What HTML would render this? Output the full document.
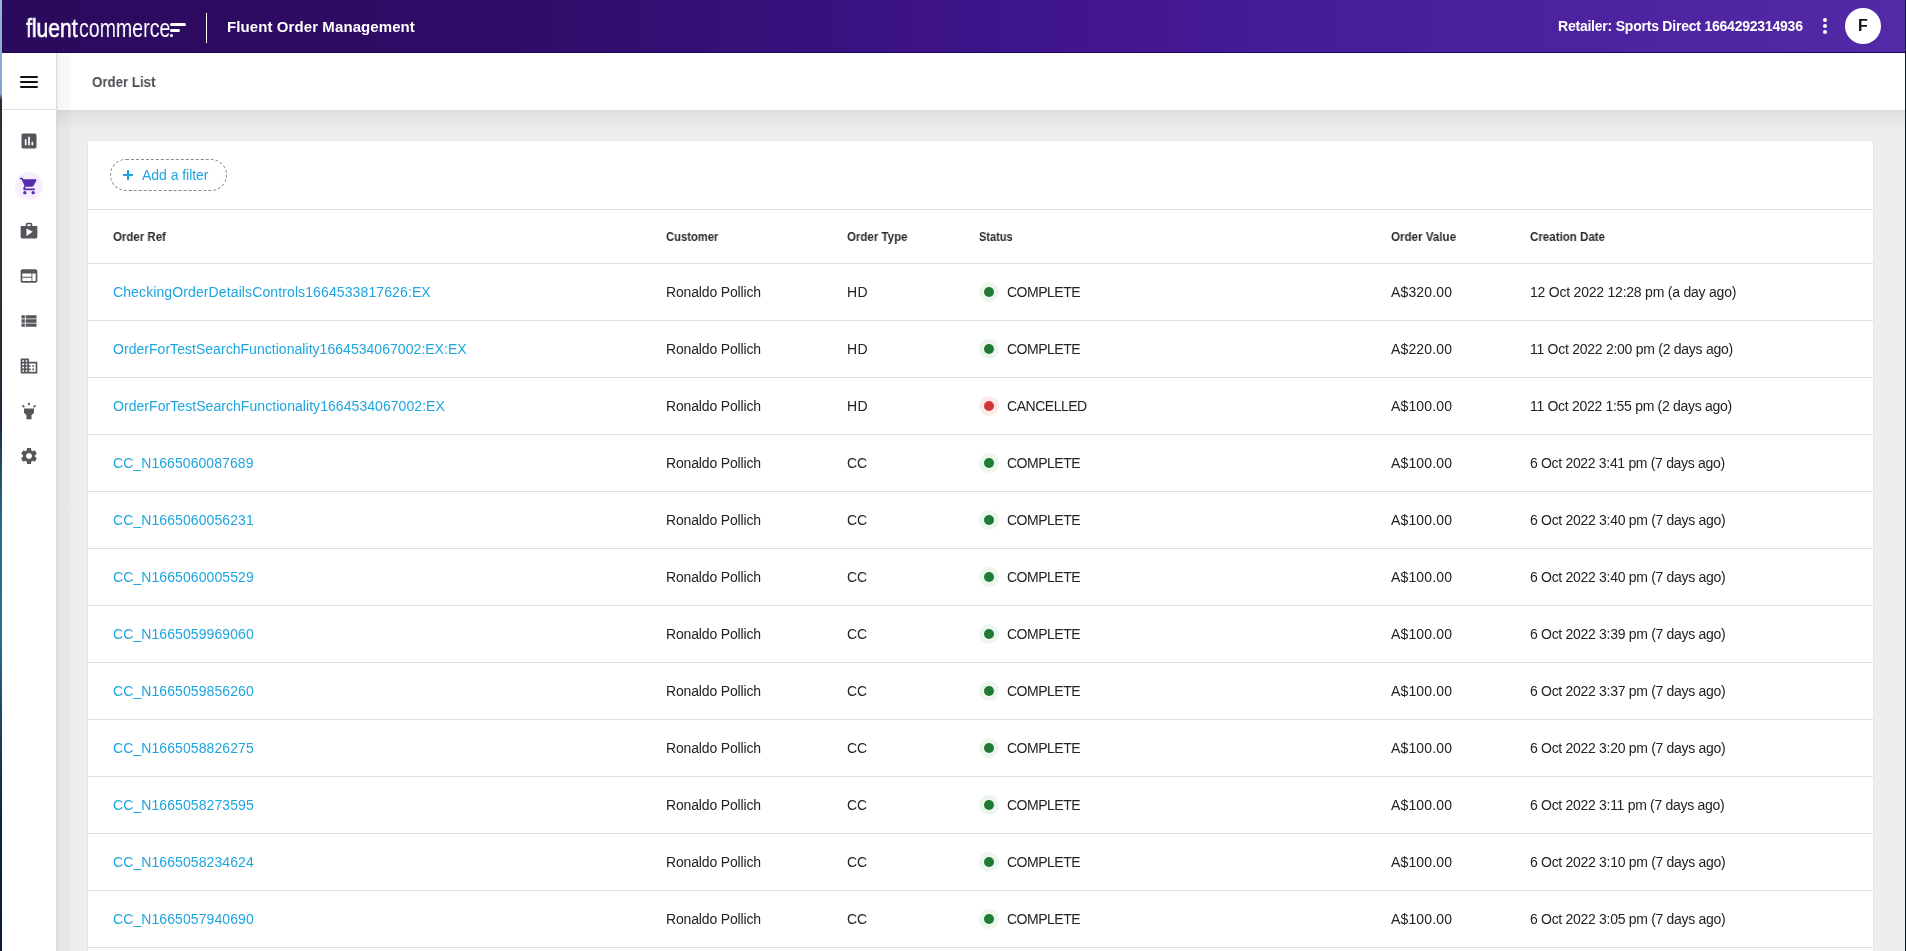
<!DOCTYPE html><html><head><meta charset="utf-8"><style>
*{box-sizing:border-box;margin:0;padding:0}
html,body{width:1906px;height:951px;overflow:hidden;background:#eeeeee;font-family:"Liberation Sans",sans-serif;position:relative}
.t{position:absolute;white-space:nowrap;line-height:1;will-change:transform}
.ic{position:absolute;display:block}
#edgeL{position:absolute;left:0;top:0;width:2px;height:951px;background:linear-gradient(to bottom,#94b8d8 0,#7ea6cb 94px,#2b2c38 100px,#35302e 250px,#1d2638 420px,#21506c 470px,#2a6d88 530px,#2b6f8a 640px,#1c4363 720px,#102341 820px,#0c1a33 951px)}
#edgeR{position:absolute;left:1905px;top:0;width:1px;height:951px;background:#0e1a28}
#hdr{position:absolute;left:2px;top:0;width:1903px;height:53px;background:linear-gradient(to right,#2b0a5d 0%,#2f0c66 25%,#3d1388 50%,#4a1f9e 75%,#5229a6 100%);border-bottom:1px solid #1c0550}
.bar{position:absolute;height:3px;border-radius:1.5px;background:#fff}
.divider{position:absolute;left:206px;top:13px;width:1px;height:30px;background:#fff}
.hw{color:#fff;font-weight:bold}
.kebab{position:absolute;left:1823px;width:4px;height:4px;border-radius:50%;background:#fff}
.avatar{position:absolute;left:1845px;top:8px;width:36px;height:36px;border-radius:50%;background:#fff}
#side{position:absolute;left:2px;top:53px;width:55px;height:898px;background:#fff;border-right:1px solid #dcdcdc}
#side .menu{position:absolute;left:0;top:56px;width:54px;height:1px;background:#e2e2e2}
.hamb{position:absolute;left:20px;width:18px;height:2px;background:#111;border-radius:1px}
.act{position:absolute;left:15px;top:172px;width:28px;height:28px;border-radius:50%;background:#f6eefd}
#titlebar{position:absolute;left:57px;top:53px;width:1848px;height:57px;background:#fff}
#shadowL{position:absolute;left:57px;top:53px;width:15px;height:898px;background:linear-gradient(to right,rgba(0,0,0,.08),rgba(0,0,0,.035) 12%,rgba(0,0,0,.025) 80%,rgba(0,0,0,0))}
#shadowT{position:absolute;left:57px;top:110px;width:1848px;height:26px;background:linear-gradient(to bottom,rgba(0,0,0,.075),rgba(0,0,0,.035) 30%,rgba(0,0,0,.01) 65%,rgba(0,0,0,0))}
#card{position:absolute;left:88px;top:141px;width:1785px;height:830px;background:#fff;border-radius:2px;box-shadow:0 0 2px rgba(0,0,0,.1),0 1px 2px rgba(0,0,0,.06)}
.hl{position:absolute;left:88px;width:1785px;height:1px;background:#e0e0e0}
.filter{position:absolute;left:110px;top:159px;width:117px;height:32px;border:1px dashed #8a8a8a;border-radius:16px}
.plus{position:absolute;background:#1ea5df}
.lk{color:#1ea5df;font-size:14px;letter-spacing:.09px}
.tx{color:#222;font-size:14px}
.th{color:#2b2b2b;font-size:12px;font-weight:bold;transform-origin:0 0}
.nm{letter-spacing:-.13px}.vl{letter-spacing:.15px}.st{letter-spacing:-.55px}.dt{letter-spacing:-.3px}
.ttl{color:#4b4e53;font-size:15px;font-weight:bold;transform:scaleX(.885);transform-origin:0 0}
.halo{position:absolute;width:20px;height:20px;border-radius:50%}
.dot{position:absolute;width:10px;height:10px;border-radius:50%}
</style></head><body>
<div id="edgeL"></div>
<div id="hdr"></div>
<div class="t" style="left:26px;top:15px;font-size:26px;color:#fff;-webkit-text-stroke:.6px #fff;transform:scaleX(.81);transform-origin:0 0">fluent</div>
<div class="t" style="left:78.8px;top:15px;font-size:26px;color:#fff;transform:scaleX(.752);transform-origin:0 0">commerce</div>
<div class="bar" style="left:170px;top:23px;width:16px"></div>
<div class="bar" style="left:170px;top:28.5px;width:10px"></div>
<div class="bar" style="left:170.3px;top:34px;width:3.2px;height:3.2px"></div>
<div class="divider"></div>
<div class="t hw" style="font-size:15px;left:227px;top:19px;letter-spacing:0.091px;">Fluent Order Management</div>
<div class="t hw" style="font-size:14px;letter-spacing:-.25px;left:1558px;top:19px;letter-spacing:-0.222px;">Retailer: Sports Direct 1664292314936</div>
<div class="kebab" style="top:18px"></div>
<div class="kebab" style="top:24px"></div>
<div class="kebab" style="top:30px"></div>
<div class="avatar"></div>
<div class="t " style="font-size:16px;font-weight:bold;color:#111;left:1858px;top:18px;">F</div>
<div id="side"><div class="menu"></div></div>
<div class="hamb" style="top:76px"></div>
<div class="hamb" style="top:81px"></div>
<div class="hamb" style="top:86px"></div>
<div class="act"></div>
<svg class="ic" style="left:19px;top:131px;width:20px;height:20px" viewBox="0 0 24 24"><path fill="#53575b" d="M19 3H5c-1.1 0-2 .9-2 2v14c0 1.1.9 2 2 2h14c1.1 0 2-.9 2-2V5c0-1.1-.9-2-2-2zM9 17H7v-7h2v7zm4 0h-2V7h2v10zm4 0h-2v-4h2v4z"/></svg>
<svg class="ic" style="left:19px;top:176px;width:20px;height:20px" viewBox="0 0 24 24"><path fill="#542cb0" d="M7 18c-1.1 0-1.99.9-1.99 2S5.9 22 7 22s2-.9 2-2-.9-2-2-2zM1 2v2h2l3.6 7.59-1.35 2.45c-.16.28-.25.61-.25.96 0 1.1.9 2 2 2h12v-2H7.42c-.14 0-.25-.11-.25-.25l.03-.12.9-1.63h7.45c.75 0 1.41-.41 1.75-1.03l3.58-6.49c.08-.14.12-.31.12-.48 0-.55-.45-1-1-1H5.21l-.94-2H1zm16 16c-1.1 0-1.99.9-1.99 2s.89 2 1.99 2 2-.9 2-2-.9-2-2-2z"/></svg>
<svg class="ic" style="left:19px;top:221px;width:20px;height:20px" viewBox="0 0 24 24"><path fill="#53575b" d="M16 6V4c0-1.11-.89-2-2-2h-4c-1.11 0-2 .89-2 2v2H2v13c0 1.11.89 2 2 2h16c1.11 0 2-.89 2-2V6h-6zm-6-2h4v2h-4V4zM9 18V9l7.5 4L9 18z"/></svg>
<svg class="ic" style="left:19px;top:266px;width:20px;height:20px" viewBox="0 0 24 24"><path fill="#53575b" d="M20 4H4c-1.1 0-1.99.9-1.99 2L2 18c0 1.1.9 2 2 2h16c1.1 0 2-.9 2-2V6c0-1.1-.9-2-2-2zm-5 14H4v-4h11v4zm0-5H4V9h11v4zm5 5h-4V9h4v9z"/></svg>
<svg class="ic" style="left:19px;top:311px;width:20px;height:20px" viewBox="0 0 24 24"><path fill="#53575b" d="M3 14h4v-4H3v4zm0 5h4v-4H3v4zM3 9h4V5H3v4zm5 5h13v-4H8v4zm0 5h13v-4H8v4zM8 5v4h13V5H8z"/></svg>
<svg class="ic" style="left:19px;top:356px;width:20px;height:20px" viewBox="0 0 24 24"><path fill="#53575b" d="M12 7V3H2v18h20V7H12zM6 19H4v-2h2v2zm0-4H4v-2h2v2zm0-4H4V9h2v2zm0-4H4V5h2v2zm4 12H8v-2h2v2zm0-4H8v-2h2v2zm0-4H8V9h2v2zm0-4H8V5h2v2zm10 12h-8v-2h2v-2h-2v-2h2v-2h-2V9h8v10zm-2-8h-2v2h2v-2zm0 4h-2v2h2v-2z"/></svg>
<svg class="ic" style="left:19px;top:401px;width:20px;height:20px" viewBox="0 0 24 24"><path fill="#53575b" d="M6 14l3 3v5h6v-5l3-3V9H6zm5-12h2v3h-2zM3.5 5.875L4.914 4.46l2.12 2.122L5.62 7.997zm13.46.71l2.123-2.12 1.414 1.414L18.375 8z"/></svg>
<svg class="ic" style="left:19px;top:446px;width:20px;height:20px" viewBox="0 0 24 24"><path fill="#53575b" d="M19.14 12.94c.04-.3.06-.61.06-.94 0-.32-.02-.64-.07-.94l2.03-1.58c.18-.14.23-.41.12-.61l-1.92-3.32c-.12-.22-.37-.29-.59-.22l-2.39.96c-.5-.38-1.03-.7-1.62-.94l-.36-2.54c-.04-.24-.24-.41-.48-.41h-3.84c-.24 0-.43.17-.47.41l-.36 2.54c-.59.24-1.13.57-1.62.94l-2.39-.96c-.22-.08-.47 0-.59.22L2.74 8.87c-.12.21-.08.47.12.61l2.03 1.58c-.05.3-.09.63-.09.94s.02.64.07.94l-2.03 1.58c-.18.14-.23.41-.12.61l1.92 3.32c.12.22.37.29.59.22l2.39-.96c.5.38 1.03.7 1.62.94l.36 2.54c.05.24.24.41.48.41h3.84c.24 0 .44-.17.47-.41l.36-2.54c.59-.24 1.13-.56 1.62-.94l2.39.96c.22.08.47 0 .59-.22l1.92-3.32c.12-.22.07-.47-.12-.61l-2.01-1.58zM12 15.6c-1.98 0-3.6-1.62-3.6-3.6s1.62-3.6 3.6-3.6 3.6 1.62 3.6 3.6-1.62 3.6-3.6 3.6z"/></svg>
<div id="titlebar"></div>
<div id="shadowT"></div><div id="shadowL"></div>
<div class="t ttl" style="left:92px;top:74px;">Order List</div>
<div id="card"></div>
<div class="filter"></div>
<div class="plus" style="left:123px;top:174.4px;width:10px;height:1.4px"></div>
<div class="plus" style="left:127.3px;top:170px;width:1.4px;height:10px"></div>
<div class="t lk" style="left:142px;top:168px;letter-spacing:-0.042px;">Add a filter</div>
<div class="hl" style="top:209px"></div>
<div class="t th" style="transform:scaleX(0.955);left:113px;top:231px;">Order Ref</div>
<div class="t th" style="transform:scaleX(0.934);left:666px;top:231px;">Customer</div>
<div class="t th" style="transform:scaleX(0.957);left:847px;top:231px;">Order Type</div>
<div class="t th" style="transform:scaleX(0.914);left:979px;top:231px;">Status</div>
<div class="t th" style="transform:scaleX(0.966);left:1391px;top:231px;">Order Value</div>
<div class="t th" style="transform:scaleX(0.962);left:1530px;top:231px;">Creation Date</div>
<div class="hl" style="top:263px"></div>
<div class="t lk" style="left:113px;top:285px;letter-spacing:0.112px;">CheckingOrderDetailsControls1664533817626:EX</div>
<div class="t tx nm" style="left:666px;top:285px;letter-spacing:-0.159px;">Ronaldo Pollich</div>
<div class="t tx" style="left:847px;top:285px;letter-spacing:0.400px;">HD</div>
<div class="halo" style="left:979px;top:282px;background:#edf5ef"></div>
<div class="dot" style="left:984px;top:287px;background:#1e7b31"></div>
<div class="t tx st" style="left:1007px;top:285px;letter-spacing:-0.491px;">COMPLETE</div>
<div class="t tx vl" style="left:1391px;top:285px;letter-spacing:0.142px;">A$320.00</div>
<div class="t tx dt" style="left:1530px;top:285px;letter-spacing:-0.222px;">12 Oct 2022 12:28 pm (a day ago)</div>
<div class="hl" style="top:320px"></div>
<div class="t lk" style="left:113px;top:342px;letter-spacing:0.038px;">OrderForTestSearchFunctionality1664534067002:EX:EX</div>
<div class="t tx nm" style="left:666px;top:342px;letter-spacing:-0.159px;">Ronaldo Pollich</div>
<div class="t tx" style="left:847px;top:342px;letter-spacing:0.400px;">HD</div>
<div class="halo" style="left:979px;top:339px;background:#edf5ef"></div>
<div class="dot" style="left:984px;top:344px;background:#1e7b31"></div>
<div class="t tx st" style="left:1007px;top:342px;letter-spacing:-0.491px;">COMPLETE</div>
<div class="t tx vl" style="left:1391px;top:342px;">A$220.00</div>
<div class="t tx dt" style="left:1530px;top:342px;letter-spacing:-0.268px;">11 Oct 2022 2:00 pm (2 days ago)</div>
<div class="hl" style="top:377px"></div>
<div class="t lk" style="left:113px;top:399px;letter-spacing:0.057px;">OrderForTestSearchFunctionality1664534067002:EX</div>
<div class="t tx nm" style="left:666px;top:399px;letter-spacing:-0.159px;">Ronaldo Pollich</div>
<div class="t tx" style="left:847px;top:399px;letter-spacing:0.400px;">HD</div>
<div class="halo" style="left:979px;top:396px;background:#fcebeb"></div>
<div class="dot" style="left:984px;top:401px;background:#d23535"></div>
<div class="t tx st" style="left:1007px;top:399px;letter-spacing:-0.475px;">CANCELLED</div>
<div class="t tx vl" style="left:1391px;top:399px;">A$100.00</div>
<div class="t tx dt" style="left:1530px;top:399px;">11 Oct 2022 1:55 pm (2 days ago)</div>
<div class="hl" style="top:434px"></div>
<div class="t lk" style="left:113px;top:456px;letter-spacing:0.068px;">CC_N1665060087689</div>
<div class="t tx nm" style="left:666px;top:456px;letter-spacing:-0.159px;">Ronaldo Pollich</div>
<div class="t tx" style="left:847px;top:456px;">CC</div>
<div class="halo" style="left:979px;top:453px;background:#edf5ef"></div>
<div class="dot" style="left:984px;top:458px;background:#1e7b31"></div>
<div class="t tx st" style="left:1007px;top:456px;letter-spacing:-0.491px;">COMPLETE</div>
<div class="t tx vl" style="left:1391px;top:456px;">A$100.00</div>
<div class="t tx dt" style="left:1530px;top:456px;letter-spacing:-0.321px;">6 Oct 2022 3:41 pm (7 days ago)</div>
<div class="hl" style="top:491px"></div>
<div class="t lk" style="left:113px;top:513px;">CC_N1665060056231</div>
<div class="t tx nm" style="left:666px;top:513px;letter-spacing:-0.159px;">Ronaldo Pollich</div>
<div class="t tx" style="left:847px;top:513px;">CC</div>
<div class="halo" style="left:979px;top:510px;background:#edf5ef"></div>
<div class="dot" style="left:984px;top:515px;background:#1e7b31"></div>
<div class="t tx st" style="left:1007px;top:513px;letter-spacing:-0.491px;">COMPLETE</div>
<div class="t tx vl" style="left:1391px;top:513px;">A$100.00</div>
<div class="t tx dt" style="left:1530px;top:513px;">6 Oct 2022 3:40 pm (7 days ago)</div>
<div class="hl" style="top:548px"></div>
<div class="t lk" style="left:113px;top:570px;">CC_N1665060005529</div>
<div class="t tx nm" style="left:666px;top:570px;letter-spacing:-0.159px;">Ronaldo Pollich</div>
<div class="t tx" style="left:847px;top:570px;">CC</div>
<div class="halo" style="left:979px;top:567px;background:#edf5ef"></div>
<div class="dot" style="left:984px;top:572px;background:#1e7b31"></div>
<div class="t tx st" style="left:1007px;top:570px;letter-spacing:-0.491px;">COMPLETE</div>
<div class="t tx vl" style="left:1391px;top:570px;">A$100.00</div>
<div class="t tx dt" style="left:1530px;top:570px;">6 Oct 2022 3:40 pm (7 days ago)</div>
<div class="hl" style="top:605px"></div>
<div class="t lk" style="left:113px;top:627px;">CC_N1665059969060</div>
<div class="t tx nm" style="left:666px;top:627px;letter-spacing:-0.159px;">Ronaldo Pollich</div>
<div class="t tx" style="left:847px;top:627px;">CC</div>
<div class="halo" style="left:979px;top:624px;background:#edf5ef"></div>
<div class="dot" style="left:984px;top:629px;background:#1e7b31"></div>
<div class="t tx st" style="left:1007px;top:627px;letter-spacing:-0.491px;">COMPLETE</div>
<div class="t tx vl" style="left:1391px;top:627px;">A$100.00</div>
<div class="t tx dt" style="left:1530px;top:627px;">6 Oct 2022 3:39 pm (7 days ago)</div>
<div class="hl" style="top:662px"></div>
<div class="t lk" style="left:113px;top:684px;">CC_N1665059856260</div>
<div class="t tx nm" style="left:666px;top:684px;letter-spacing:-0.159px;">Ronaldo Pollich</div>
<div class="t tx" style="left:847px;top:684px;">CC</div>
<div class="halo" style="left:979px;top:681px;background:#edf5ef"></div>
<div class="dot" style="left:984px;top:686px;background:#1e7b31"></div>
<div class="t tx st" style="left:1007px;top:684px;letter-spacing:-0.491px;">COMPLETE</div>
<div class="t tx vl" style="left:1391px;top:684px;">A$100.00</div>
<div class="t tx dt" style="left:1530px;top:684px;">6 Oct 2022 3:37 pm (7 days ago)</div>
<div class="hl" style="top:719px"></div>
<div class="t lk" style="left:113px;top:741px;">CC_N1665058826275</div>
<div class="t tx nm" style="left:666px;top:741px;letter-spacing:-0.159px;">Ronaldo Pollich</div>
<div class="t tx" style="left:847px;top:741px;">CC</div>
<div class="halo" style="left:979px;top:738px;background:#edf5ef"></div>
<div class="dot" style="left:984px;top:743px;background:#1e7b31"></div>
<div class="t tx st" style="left:1007px;top:741px;letter-spacing:-0.491px;">COMPLETE</div>
<div class="t tx vl" style="left:1391px;top:741px;">A$100.00</div>
<div class="t tx dt" style="left:1530px;top:741px;">6 Oct 2022 3:20 pm (7 days ago)</div>
<div class="hl" style="top:776px"></div>
<div class="t lk" style="left:113px;top:798px;">CC_N1665058273595</div>
<div class="t tx nm" style="left:666px;top:798px;letter-spacing:-0.159px;">Ronaldo Pollich</div>
<div class="t tx" style="left:847px;top:798px;">CC</div>
<div class="halo" style="left:979px;top:795px;background:#edf5ef"></div>
<div class="dot" style="left:984px;top:800px;background:#1e7b31"></div>
<div class="t tx st" style="left:1007px;top:798px;letter-spacing:-0.491px;">COMPLETE</div>
<div class="t tx vl" style="left:1391px;top:798px;">A$100.00</div>
<div class="t tx dt" style="left:1530px;top:798px;">6 Oct 2022 3:11 pm (7 days ago)</div>
<div class="hl" style="top:833px"></div>
<div class="t lk" style="left:113px;top:855px;">CC_N1665058234624</div>
<div class="t tx nm" style="left:666px;top:855px;letter-spacing:-0.159px;">Ronaldo Pollich</div>
<div class="t tx" style="left:847px;top:855px;">CC</div>
<div class="halo" style="left:979px;top:852px;background:#edf5ef"></div>
<div class="dot" style="left:984px;top:857px;background:#1e7b31"></div>
<div class="t tx st" style="left:1007px;top:855px;letter-spacing:-0.491px;">COMPLETE</div>
<div class="t tx vl" style="left:1391px;top:855px;">A$100.00</div>
<div class="t tx dt" style="left:1530px;top:855px;">6 Oct 2022 3:10 pm (7 days ago)</div>
<div class="hl" style="top:890px"></div>
<div class="t lk" style="left:113px;top:912px;">CC_N1665057940690</div>
<div class="t tx nm" style="left:666px;top:912px;letter-spacing:-0.159px;">Ronaldo Pollich</div>
<div class="t tx" style="left:847px;top:912px;">CC</div>
<div class="halo" style="left:979px;top:909px;background:#edf5ef"></div>
<div class="dot" style="left:984px;top:914px;background:#1e7b31"></div>
<div class="t tx st" style="left:1007px;top:912px;letter-spacing:-0.491px;">COMPLETE</div>
<div class="t tx vl" style="left:1391px;top:912px;">A$100.00</div>
<div class="t tx dt" style="left:1530px;top:912px;">6 Oct 2022 3:05 pm (7 days ago)</div>
<div class="hl" style="top:947px"></div>
<div id="edgeR"></div>
</body></html>
